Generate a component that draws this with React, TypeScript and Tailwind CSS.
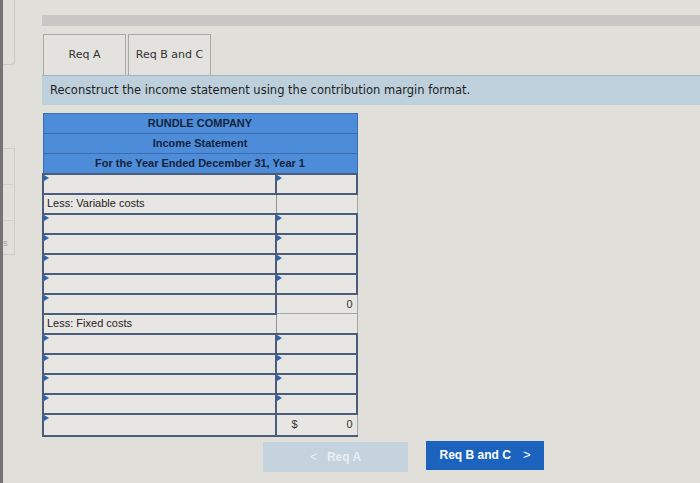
import React from 'react';

type Row =
  | { kind: 'input'; right?: 'input' | 'zero' | 'dollar' }
  | { kind: 'label'; text: string };

const ROWS: Row[] = [
  { kind: 'input', right: 'input' },
  { kind: 'label', text: 'Less: Variable costs' },
  { kind: 'input', right: 'input' },
  { kind: 'input', right: 'input' },
  { kind: 'input', right: 'input' },
  { kind: 'input', right: 'input' },
  { kind: 'input', right: 'zero' },
  { kind: 'label', text: 'Less: Fixed costs' },
  { kind: 'input', right: 'input' },
  { kind: 'input', right: 'input' },
  { kind: 'input', right: 'input' },
  { kind: 'input', right: 'input' },
  { kind: 'input', right: 'dollar' },
];

const Marker = () => (
  <span className="absolute left-0 top-0 w-0 h-0 border-l-[5px] border-l-[#2f62b5] border-y-[3px] border-y-transparent" />
);

const InputCell = ({ w }: { w: string }) => (
  <td className={`relative ${w} h-[20px] border-2 border-[#4b5d7a] bg-[#e8e6e2] p-0`}>
    <Marker />
  </td>
);

export default function App() {
  return (
    <div className="w-[700px] h-[483px] bg-[#e1dfda] flex overflow-hidden">
      {/* left edge of the window */}
      <div className="w-[3px] h-full bg-[#747474]" />
      <div className="w-[39px] flex flex-col">
        <div className="w-[12px] h-[65px] border-r border-b border-[#cbc9c5] rounded-br-[4px]" />
        <div className="mt-[83px] w-[12px] h-[107px] border-r border-y border-[#cfcdc9] flex flex-col">
          <div className="h-[36px] border-b border-[#d2d0cc]" />
          <div className="h-[36px] border-b border-[#d2d0cc]" />
          <div className="flex-1 flex items-end">
            <span className="text-[9px] text-[#999] leading-none pb-[6px]" style={{ fontFamily: 'Liberation Sans, sans-serif' }}>s</span>
          </div>
        </div>
      </div>

      <div className="flex-1 flex flex-col pt-[15px]" style={{ fontFamily: '"DejaVu Sans", Verdana, sans-serif' }}>
        <div className="h-[11px] bg-[#c9c7c5]" />
        <div className="flex items-end gap-[2px] mt-[8px] pl-[1px]">
          <div className="w-[83px] h-[41px] border border-b-0 border-[#a9a8a6] bg-[#e4e2df] flex items-center justify-center text-[11px] text-[#333]">
            Req A
          </div>
          <div className="w-[83px] h-[41px] border border-b-0 border-[#a9a8a6] bg-[#e4e2df] flex items-center justify-center text-[11px] text-[#333]">
            Req B and C
          </div>
        </div>
        <div className="h-[30px] bg-[#bdd0dc] border-t border-[#9fb3c0] flex items-center pl-[8px] text-[11.5px] text-[#1f1f1f]">
          Reconstruct the income statement using the contribution margin format.
        </div>

        <div className="mt-[8px]" style={{ fontFamily: '"Liberation Sans", Arial, sans-serif' }}>
          <table className="border-collapse w-[316px] text-[11px] text-[#1c1c1c]">
            <tbody>
              {['RUNDLE COMPANY', 'Income Statement', 'For the Year Ended December 31, Year 1'].map((t) => (
                <tr key={t}>
                  <td colSpan={2} className="h-[20px] p-0 bg-[#4d8cd8] border border-[#3b6cad] text-center font-bold text-[#13233b]">
                    {t}
                  </td>
                </tr>
              ))}
              {ROWS.map((r, i) =>
                r.kind === 'label' ? (
                  <tr key={i}>
                    <td className="w-[235px] h-[20px] p-0 pl-[3px] border border-[#8f949c] bg-[#e8e6e2] text-[#222] border-l-2 border-l-[#4b5d7a]">
                      {r.text}
                    </td>
                    <td className="w-[81px] h-[20px] p-0 border border-[#a3a6ab] bg-[#e8e6e2]" />
                  </tr>
                ) : (
                  <tr key={i}>
                    <InputCell w="w-[235px]" />
                    {r.right === 'input' ? (
                      <InputCell w="w-[81px]" />
                    ) : (
                      <td className={`w-[81px] h-[20px] p-0 px-[4px] border border-[#a3a6ab] bg-[#e8e6e2] ${r.right === 'dollar' ? 'border-b-2 border-b-[#4b5d7a] h-[22px]' : ''}`}>
                        <div className="flex justify-between text-[#333]">
                          <span className="pl-[10px]">{r.right === 'dollar' ? '$' : ''}</span>
                          <span>0</span>
                        </div>
                      </td>
                    )}
                  </tr>
                )
              )}
            </tbody>
          </table>
        </div>

        <div className="flex items-start mt-[4px] pl-[221px] gap-[18px]" style={{ fontFamily: '"Liberation Sans", Arial, sans-serif' }}>
          <div className="w-[145px] h-[30px] bg-[#c5d3de] flex items-center justify-center gap-[10px] text-[12px] font-bold text-[#e9eff4] mt-[1px]">
            <span className="font-normal">&lt;</span>
            <span>Req A</span>
          </div>
          <div className="w-[118px] h-[29px] bg-[#1c63bd] flex items-center justify-center gap-[12px] text-[12px] font-bold text-white">
            <span>Req B and C</span>
            <span className="font-normal text-[13px]">&gt;</span>
          </div>
        </div>
      </div>
    </div>
  );
}
